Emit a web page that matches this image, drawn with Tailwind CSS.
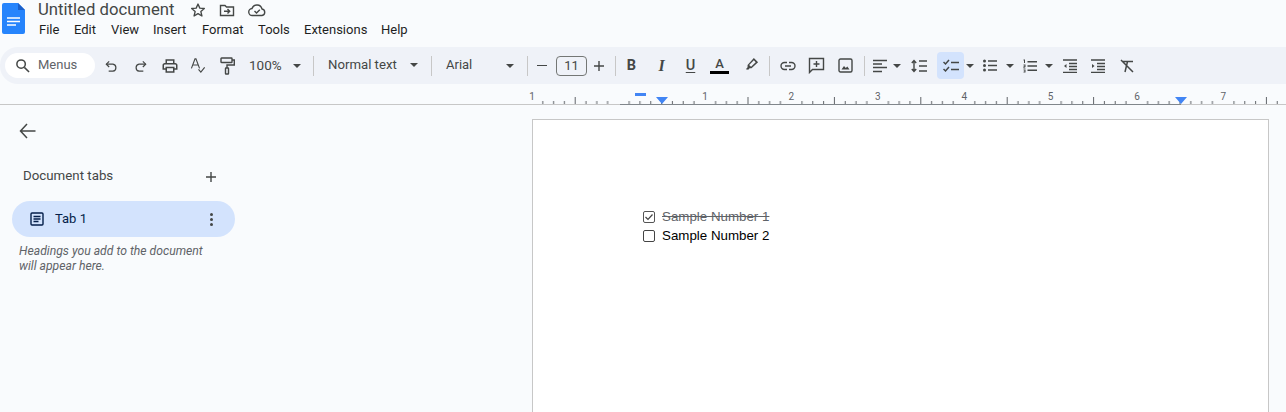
<!DOCTYPE html>
<html lang="en" class="overflow-hidden">
<head>
<meta charset="utf-8">
<script src="https://cdn.jsdelivr.net/npm/@tailwindcss/browser@4"></script>
<title>Untitled document</title>
</head>
<body class="w-[1286px] h-[412px] overflow-hidden bg-[#f9fbfd] font-['Roboto',sans-serif] text-[#444746]">
<header class="flex h-[47px]">
  <svg class="ml-[2px] mt-[3px] w-[23px] h-[31px]" viewBox="0 0 23 31"><path d="M2 0h14l7 7v22a2 2 0 0 1-2 2H2a2 2 0 0 1-2-2V2a2 2 0 0 1 2-2z" fill="#2684fc"/><path d="M16 0l7 7h-7z" fill="#1a5fc9"/><path d="M5 15h13M5 18.500h13M5 22h9" stroke="#fff" stroke-width="1.500"/></svg>
  <div class="ml-[13px] flex flex-col">
    <div class="flex items-center h-[20px]">
      <span class="text-[16.700px] leading-[20px] w-[152px] whitespace-nowrap">Untitled document</span>
      <svg class="w-[16px] h-[16px]" viewBox="0 0 24 24" fill="none" stroke="#444746" stroke-width="2" stroke-linejoin="round"><path d="M12 3l2.700 6.200 6.800.6-5.200 4.500 1.600 6.700-5.900-3.600-5.900 3.600 1.600-6.700L2.500 9.800l6.800-.6z"/></svg>
      <svg class="ml-[13px] w-[16px] h-[16px]" viewBox="0 0 16 16" fill="none" stroke="#444746" stroke-width="1.400"><path d="M1.500 13.500v-10h4.500l1.500 1.500h7v8.500z"/><path d="M5 9.200h5.500M8.500 7l2.200 2.200-2.200 2.200"/></svg>
      <svg class="ml-[13px] w-[18px] h-[16px]" viewBox="0 0 18 16" fill="none" stroke="#444746" stroke-width="1.400"><path d="M4.500 13.500a3.500 3.500 0 0 1-.5-7 5.200 5.200 0 0 1 10 .5 3.300 3.300 0 0 1 0 6.500z"/><path d="M6.500 9l2 2 3.300-3.300"/></svg>
    </div>
    <nav class="flex text-[13px] leading-[18px] mt-[1px] ml-[1px] text-[#1f1f1f]">
      <span class="w-[35px]">File</span><span class="w-[37px]">Edit</span><span class="w-[42px]">View</span><span class="w-[49px]">Insert</span><span class="w-[56px]">Format</span><span class="w-[46px]">Tools</span><span class="w-[77px]">Extensions</span><span>Help</span>
    </nav>
  </div>
</header>

<div class="flex items-center h-[37px] bg-[#eff2f8] rounded-l-[18px] text-[13px]">
  <div class="ml-[5px] w-[90px] h-[25px] rounded-full bg-white flex items-center">
    <svg class="ml-[10px] w-[15px] h-[15px]" viewBox="0 0 16 16" fill="none" stroke="#444746" stroke-width="1.600"><circle cx="6.500" cy="6.500" r="4.500"/><path d="M10 10l5 5"/></svg>
    <span class="ml-[8px] text-[#5f6368] pb-[1px]">Menus</span>
  </div>
  <div class="ml-[2px] w-[29px] flex justify-center"><svg class="w-[15px] h-[15px] mt-[2px]" viewBox="0 0 16 16" fill="none" stroke="#444746" stroke-width="1.300"><path d="M5.500 2.500L2.500 5.500l3 3"/><path d="M2.500 5.500h7a3.800 3.800 0 0 1 0 7.500H5"/></svg></div>
  <div class="w-[29px] flex justify-center"><svg class="w-[15px] h-[15px] mt-[2px]" viewBox="0 0 16 16" fill="none" stroke="#444746" stroke-width="1.300"><path d="M10.500 2.500l3 3-3 3"/><path d="M13.500 5.500h-7a3.800 3.800 0 0 0 0 7.500H11"/></svg></div>
  <div class="w-[29px] flex justify-center"><svg class="w-[18px] h-[18px]" viewBox="0 0 24 24" fill="#444746"><path d="M19 8h-1V3H6v5H5c-1.660 0-3 1.340-3 3v6h4v4h12v-4h4v-6c0-1.660-1.340-3-3-3zM8 5h8v3H8V5zm8 12v2H8v-4h8v2zm2-2v-2H6v2H4v-4c0-.550.450-1 1-1h14c.550 0 1 .450 1 1v4h-2z"/></svg></div>
  <div class="w-[29px] flex justify-center"><svg class="w-[17px] h-[17px]" viewBox="0 0 18 18" fill="none" stroke="#444746" stroke-width="1.200"><path d="M1.500 12L5.300 2h1l3.800 10M3 8.500h5.600"/><path d="M9 13l2.500 3 4-5"/></svg></div>
  <div class="w-[28px] flex justify-center"><svg class="w-[15px] h-[18px]" viewBox="0 0 15 18" fill="none" stroke="#444746" stroke-width="1.400"><rect x="1" y="1" width="11" height="4.500" rx=".5"/><path d="M12 3h2.300v5H7v3"/><rect x="5.500" y="11" width="3" height="6" rx=".5"/></svg></div>

  <div class="w-[72px] pl-[8px] flex items-center pb-[1px]"><span class="w-[44px] text-[13.500px]">100%</span><span class="w-0 h-0 mt-[1px] border-x-[4px] border-x-transparent border-t-[4px] border-t-[#444746]"></span></div>
  <div class="w-px h-[20px] bg-[#c7c7c7]"></div>
  <div class="w-[117px] pl-[14px] flex items-center pb-[1px]"><span class="w-[82px] whitespace-nowrap text-[13.200px]">Normal text</span><span class="w-0 h-0 mt-[1px] border-x-[4px] border-x-transparent border-t-[4px] border-t-[#444746]"></span></div>
  <div class="w-px h-[20px] bg-[#c7c7c7]"></div>
  <div class="w-[95px] pl-[14px] flex items-center pb-[1px]"><span class="w-[60px]">Arial</span><span class="w-0 h-0 mt-[1px] border-x-[4px] border-x-transparent border-t-[4px] border-t-[#444746]"></span></div>
  <div class="w-px h-[20px] bg-[#c7c7c7]"></div>
  <div class="w-[28px] flex justify-center"><span class="w-[10px] h-[1.500px] bg-[#444746]"></span></div>
  <div class="w-[31px] h-[20px] border border-[#747775] rounded-[4px] flex items-center justify-center text-[13px] text-[#444746]">11</div>
  <div class="w-[24px] flex justify-center"><svg class="w-[12px] h-[12px]" viewBox="0 0 12 12" stroke="#444746" stroke-width="1.400"><path d="M1 6h10M6 1v10"/></svg></div>
  <div class="ml-[4px] w-px h-[20px] bg-[#c7c7c7]"></div>
  <div class="w-[31px] text-center font-bold text-[14.500px] pt-[1px]">B</div>
  <div class="w-[29px] text-center italic font-bold text-[16px] font-['Liberation_Serif',serif] pt-[1px]">I</div>
  <div class="w-[29px] text-center text-[14.500px] font-medium underline underline-offset-[2px] pt-[1px]">U</div>
  <div class="w-[29px] flex flex-col items-center"><span class="text-[13px] leading-[14px] font-medium">A</span><span class="w-[19px] h-[3px] bg-black"></span></div>
  <div class="w-[34px] flex justify-center"><svg class="w-[15px] h-[15px] -mt-[2px]" viewBox="0 0 16 16" fill="#444746"><path d="M10.500 1l4.500 4.500-7 6.500H6L4.500 13.500 2 13l1.800-2V8.500zM10.500 3.500L5.500 8.500l2 2 5-5z" fill-rule="evenodd"/></svg></div>
  <div class="ml-[1px] w-px h-[20px] bg-[#c7c7c7]"></div>
  <div class="w-[36px] flex justify-center"><svg class="w-[16px] h-[16px]" viewBox="0 0 16 16" fill="none" stroke="#444746" stroke-width="1.400"><path d="M7 11.500H4.500a3.500 3.500 0 0 1 0-7H7M9 4.500h2.500a3.500 3.500 0 0 1 0 7H9M5 8h6"/></svg></div>
  <div class="w-[20px] flex justify-center"><svg class="w-[17px] h-[17px]" viewBox="0 0 17 17" fill="none" stroke="#444746" stroke-width="1.400"><path d="M1.500 1.500h14v11H4.500l-3 3z"/><path d="M8.500 4v6M5.500 7h6"/></svg></div>
  <div class="w-[38px] flex justify-center"><svg class="w-[15px] h-[15px]" viewBox="0 0 15 15" fill="none" stroke="#444746" stroke-width="1.400"><rect x="1" y="1" width="13" height="13" rx="1.500"/><path d="M3.500 11.500l2.500-3.500 1.800 2 1.500-1.500 2.200 3z" fill="#444746" stroke="none"/></svg></div>
  <div class="w-px h-[20px] bg-[#c7c7c7]"></div>
  <div class="w-[30px] flex justify-center"><svg class="w-[14px] h-[14px]" viewBox="0 0 14 14" stroke="#444746" stroke-width="1.400"><path d="M0 1.500h14M0 5h9M0 8.500h14M0 12.500h9"/></svg></div>
  <span class="-ml-[2px] w-0 h-0 border-x-[4px] border-x-transparent border-t-[4px] border-t-[#444746]"></span>
  <div class="w-[36px] flex justify-center"><svg class="w-[16px] h-[14px]" viewBox="0 0 16 14" fill="none" stroke="#444746" stroke-width="1.400"><path d="M3 2v10M.8 4L3 1.500 5.200 4M.8 10L3 12.500 5.200 10M8 2h8M8 7h8M8 12h8"/></svg></div>
  <div class="w-[27px] h-[27px] rounded-[4px] bg-[#d3e3fd] flex items-center justify-center"><svg class="w-[16px] h-[14px]" viewBox="0 0 16 14" fill="none" stroke="#444746" stroke-width="1.500"><path d="M.5 3l2 2L6 1M.5 10l2 2L6 8"/><path d="M8 3.500h8M8 10.500h8"/></svg></div>
  <div class="w-[12px] flex justify-center"><span class="w-0 h-0 border-x-[4px] border-x-transparent border-t-[4px] border-t-[#444746]"></span></div>
  <div class="w-[28px] flex justify-center"><svg class="w-[14px] h-[13px]" viewBox="0 0 14 13" fill="#444746"><circle cx="1.500" cy="2" r="1.500"/><circle cx="1.500" cy="6.500" r="1.500"/><circle cx="1.500" cy="11" r="1.500"/><path d="M5 1.300h9v1.400H5zM5 5.800h9v1.400H5zM5 10.300h9v1.400H5z"/></svg></div>
  <div class="w-[12px] flex justify-center"><span class="w-0 h-0 border-x-[4px] border-x-transparent border-t-[4px] border-t-[#444746]"></span></div>
  <div class="w-[28px] flex justify-center"><svg class="w-[14px] h-[14px]" viewBox="0 0 14 14" fill="#444746"><path d="M4.500 2h9.500v1.400H4.500zM4.500 6.300h9.500v1.400H4.500zM4.500 10.600h9.500V12H4.500zM.5 .5h1.500v3.500h-1v-2.500h-.5zM.5 5.500h2v2.500h-1v.8h1v.7h-2v-2.200h1v-.8h-1zM.5 10.500h2v3h-2v-.7h1v-.5h-.7v-.6h.7v-.5h-1z"/></svg></div>
  <div class="w-[10px] flex justify-center"><span class="w-0 h-0 border-x-[4px] border-x-transparent border-t-[4px] border-t-[#444746]"></span></div>
  <div class="w-[32px] flex justify-center"><svg class="w-[14px] h-[14px]" viewBox="0 0 14 14" stroke="#444746" stroke-width="1.300" fill="#444746"><path d="M0 1h14M6 4.500h8M6 7.500h8M6 10.500h8M0 13.300h14"/><path d="M3.500 5v4L1 7z" stroke="none"/></svg></div>
  <div class="w-[24px] flex justify-center"><svg class="w-[14px] h-[14px]" viewBox="0 0 14 14" stroke="#444746" stroke-width="1.300" fill="#444746"><path d="M0 1h14M6 4.500h8M6 7.500h8M6 10.500h8M0 13.300h14"/><path d="M1 5v4l2.500-2z" stroke="none"/></svg></div>
  <div class="w-[34px] flex justify-center"><svg class="w-[14px] h-[14px]" viewBox="0 0 14 14" fill="none" stroke="#444746" stroke-width="1.500"><path d="M2 2.500h11M7.500 2.500L5 13M1 1l12 12"/></svg></div>
</div>

<svg class="block w-[1286px] h-[21px]" viewBox="0 0 1286 21" font-family="Roboto" font-size="10" fill="#5f6368">
  <defs>
    <pattern id="t" patternUnits="userSpaceOnUse" x="532" y="0" width="86.400" height="21">
      <path d="M10.800 17v3M21.600 17v3M32.400 17v3M43.200 13v7M54 17v3M64.800 17v3M75.600 17v3" stroke="#5f6368" stroke-width="1"/>
    </pattern>
  </defs>
  <rect x="532" y="0" width="754" height="21" fill="url(#t)"/>
  <rect x="0" y="20" width="1286" height="1" fill="#c7c7c7"/>
  <rect x="620" y="20" width="561" height="1" fill="#80868b"/>
  <text x="532" y="16" text-anchor="middle">1</text>
  <text x="705" y="16" text-anchor="middle">1</text>
  <text x="791.400" y="16" text-anchor="middle">2</text>
  <text x="877.800" y="16" text-anchor="middle">3</text>
  <text x="964.200" y="16" text-anchor="middle">4</text>
  <text x="1050.600" y="16" text-anchor="middle">5</text>
  <text x="1137" y="16" text-anchor="middle">6</text>
  <text x="1223.400" y="16" text-anchor="middle">7</text>
  <rect x="635" y="9" width="11" height="3" fill="#4285f4"/>
  <path d="M656 13h12l-6 7zM1175 13h12l-6 7z" fill="#4285f4"/>
</svg>

<main class="flex h-[307px] overflow-hidden">
  <aside class="w-[532px] shrink-0">
    <svg class="ml-[19px] mt-[18px] w-[17px] h-[16px]" viewBox="0 0 17 16" fill="none" stroke="#444746" stroke-width="1.500"><path d="M8 1L1.500 8 8 15M1.500 8H16.500"/></svg>
    <div class="mt-[28px] w-[235px] pl-[23px] pr-[18px] flex items-center justify-between h-[18px]">
      <span class="text-[13.300px] text-[#444746]">Document tabs</span>
      <svg class="w-[12px] h-[12px] mt-[1px]" viewBox="0 0 12 12" stroke="#444746" stroke-width="1.400"><path d="M1 6h10M6 1v10"/></svg>
    </div>
    <div class="mt-[16px] ml-[12px] w-[223px] h-[36px] rounded-full bg-[#d3e3fd] flex items-center pl-[18px] pr-[22px] text-[#041e49]">
      <svg class="w-[14px] h-[14px]" viewBox="0 0 14 14" fill="none" stroke="#041e49" stroke-width="1.400"><rect x="1" y="1" width="12" height="12" rx="1"/><path d="M3.500 4.500h7M3.500 7h7M3.500 9.500h5"/></svg>
      <span class="ml-[11px] text-[13px]">Tab 1</span>
      <span class="ml-auto flex flex-col gap-[2px]"><i class="block w-[3px] h-[3px] rounded-full bg-[#444746]"></i><i class="block w-[3px] h-[3px] rounded-full bg-[#444746]"></i><i class="block w-[3px] h-[3px] rounded-full bg-[#444746]"></i></span>
    </div>
    <p class="mt-[7px] ml-[19px] w-[210px] text-[12.200px] leading-[15px] italic text-[#5f6368]">Headings you add to the document<br>will appear here.</p>
  </aside>
  <div class="mt-[14px] w-[737px] h-[400px] shrink-0 bg-white border border-[#c7c7c7] pl-[110px] pt-[87px] font-['Liberation_Sans',sans-serif] text-[13.330px] leading-[19px] text-black">
    <div class="flex items-center h-[19px]">
      <span class="w-[12px] h-[12px] border border-[#555] rounded-[2px] flex items-center justify-center"><svg class="w-[10px] h-[10px]" viewBox="0 0 10 10" fill="none" stroke="#444" stroke-width="1.200"><path d="M1.500 5l2.500 2.500 4.500-5"/></svg></span>
      <span class="ml-[7px] line-through text-[#5f6368]">Sample Number 1</span>
    </div>
    <div class="flex items-center h-[19px]">
      <span class="w-[12px] h-[12px] border border-[#444] rounded-[2px]"></span>
      <span class="ml-[7px]">Sample Number 2</span>
    </div>
  </div>
</main>
</body>
</html>
